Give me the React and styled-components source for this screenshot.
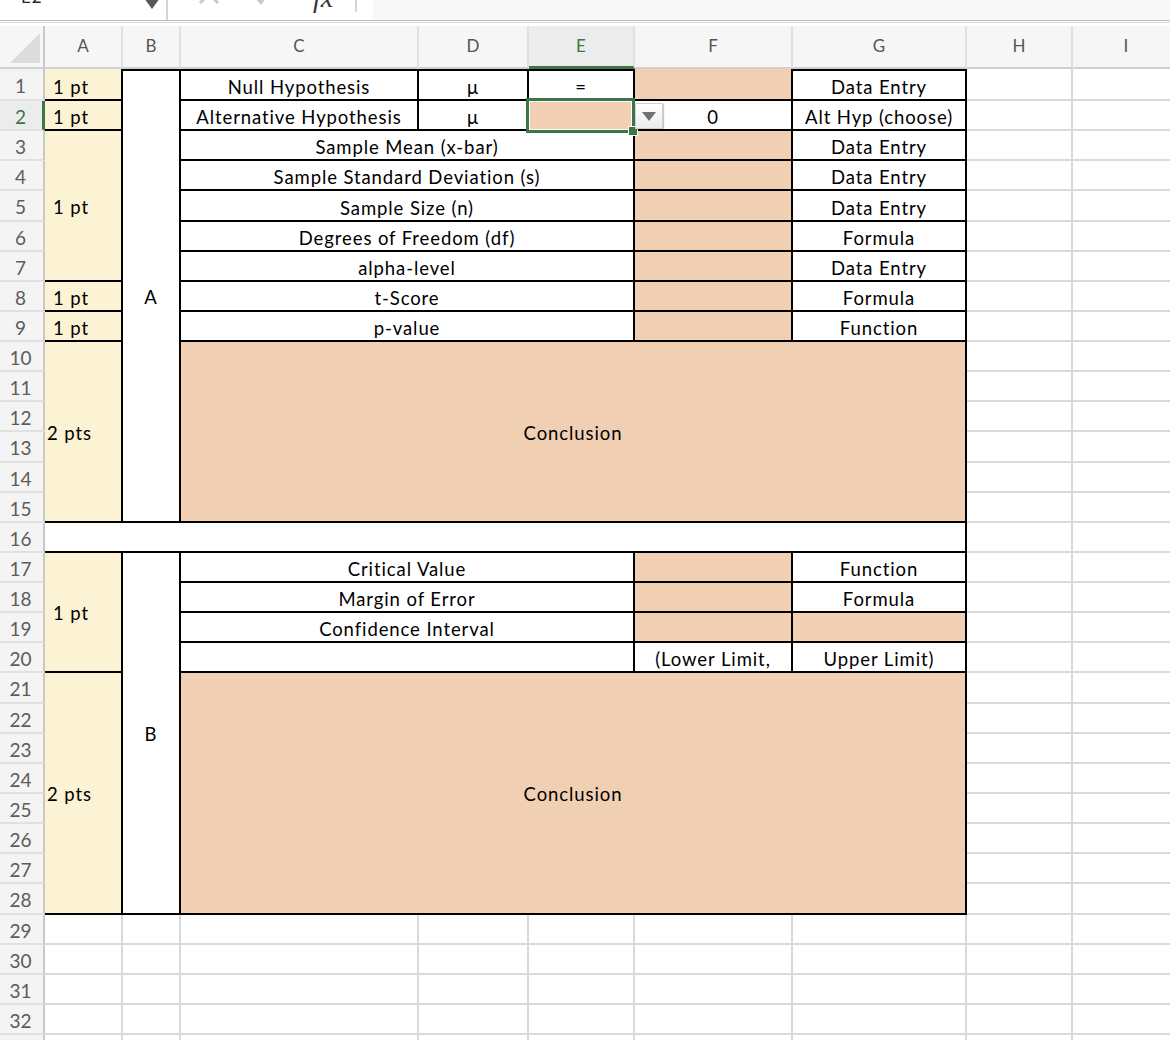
import React from 'react';
import styled, { createGlobalStyle, css } from 'styled-components';

const GlobalStyle = createGlobalStyle`
  html, body { margin: 0; padding: 0; background: #fff; }
  body { font-family: Lato, "Liberation Sans", sans-serif; overflow: hidden; width: 1170px; height: 1040px; }
`;

const GREEN = '#3b7548';
const LETTERS = 'ABCDEFGHI';
const COL_WIDTHS = [45, 78, 58, 238, 110, 106, 158, 174, 106, 108];
const ROW_COUNT = 33;
const ROW_HEIGHTS = (() => {
  const h = [32];
  let prev = 101;
  for (let i = 2; i <= ROW_COUNT; i++) {
    const b = 101 + Math.round(30.13 * (i - 1));
    h.push(b - prev);
    prev = b;
  }
  return h;
})();

const FILLS = { y: '#fcf2d4', s: '#f1cfb2', w: '#ffffff' };

/* ---------- top formula bar ---------- */
const Page = styled.div`
  display: flex;
  flex-direction: column;
  width: 1170px;
  height: 1040px;
  overflow: hidden;
`;

const TopBar = styled.div`
  height: 20px;
  display: flex;
  align-items: flex-start;
  overflow: hidden;
  background: #fff;
  flex: none;
`;

const NameBox = styled.div`
  width: 166px;
  height: 20px;
  border-right: 2px solid #d2d2d2;
  display: flex;
  justify-content: space-between;
  align-items: flex-start;
  flex: none;
`;

const NameText = styled.span`
  font: 17px/17px Lato, sans-serif;
  color: #2a2a2a;
  margin-top: -12px;
  margin-left: 21px;
  letter-spacing: 1px;
`;

const NameArrow = styled.span`
  width: 0;
  height: 0;
  border-left: 8px solid transparent;
  border-right: 8px solid transparent;
  border-top: 11px solid #585858;
  margin-top: -2px;
  margin-right: 6px;
`;

const ToolIcon = styled.svg`
  flex: none;
  margin-left: ${p => p.$ml}px;
  margin-top: ${p => p.$mt}px;
`;

const Fx = styled.span`
  font: italic 28px/28px "Liberation Serif", serif;
  color: #333;
  margin-left: 40px;
  margin-top: -16px;
  flex: none;
`;

const BarSep = styled.span`
  width: 2px;
  height: 12px;
  background: #d6d6d6;
  margin-left: 22px;
  flex: none;
`;

const FormulaInput = styled.div`
  flex: 1;
  height: 20px;
  margin-left: 16px;
  background: #f8f8f8;
`;

const Divider = styled.div`
  height: 6px;
  flex: none;
  background: linear-gradient(#bdbdbd 0 1px, #ffffff 1px 2px, #dadada 2px 3px, #ffffff 3px);
`;

/* ---------- sheet ---------- */
const Sheet = styled.div`
  display: grid;
  grid-template-columns: ${COL_WIDTHS.map(w => w + 'px').join(' ')};
  grid-template-rows: 43px ${ROW_HEIGHTS.map(h => h + 'px').join(' ')};
  flex: none;
`;

const Corner = styled.div`
  grid-column: 1;
  grid-row: 1;
  box-sizing: border-box;
  background: #f6f6f6;
  border-right: 2px solid #cacaca;
  border-bottom: 2px solid #d0d0d0;
  display: flex;
  align-items: flex-end;
  justify-content: flex-end;
  padding: 0 3px 4px 0;
`;

const CornerTriangle = styled.span`
  width: 0;
  height: 0;
  border-left: 30px solid transparent;
  border-bottom: 30px solid #dcdcdc;
`;

const ColHeader = styled.div`
  grid-column: ${p => p.$col};
  grid-row: 1;
  box-sizing: border-box;
  background: ${p => (p.$active ? '#ececec' : '#f6f6f6')};
  border-right: 2px solid #e0e0e0;
  border-bottom: ${p => (p.$active ? `3px solid ${GREEN}` : '2px solid #d0d0d0')};
  color: ${p => (p.$active ? GREEN : '#555')};
  font: 17px/20px Lato, sans-serif;
  display: flex;
  align-items: center;
  justify-content: center;
  padding-bottom: ${p => (p.$active ? '1px' : '2px')};
`;

const RowHeader = styled.div`
  grid-column: 1;
  grid-row: ${p => p.$row};
  box-sizing: border-box;
  background: ${p => (p.$active ? '#ececec' : '#f4f4f4')};
  border-right: ${p => (p.$active ? `3px solid ${GREEN}` : '2px solid #c8c8c8')};
  border-bottom: 2px solid #e0e0e0;
  color: ${p => (p.$active ? GREEN : '#5c5c5c')};
  font: 19px/22px Lato, sans-serif;
  display: flex;
  align-items: center;
  justify-content: center;
  padding: 3px ${p => (p.$active ? '1px' : '2px')} 0 0;
`;

const Cell = styled.div`
  grid-column: ${p => p.$col} / span ${p => p.$cs};
  grid-row: ${p => p.$row} / span ${p => p.$rs};
  box-sizing: border-box;
  position: relative;
  display: flex;
  align-items: ${p => (p.$mid ? 'center' : 'flex-end')};
  justify-content: ${p => (p.$left ? 'flex-start' : 'center')};
  padding: ${p => (p.$mid ? `2px 4px 0 ${p.$pad}px` : `0 4px 1px ${p.$pad}px`)};
  background: ${p => FILLS[p.$fill]};
  border-right: 2px solid #000;
  border-bottom: 2px solid #000;
  ${p => p.$top && css`border-top: 2px solid #000;`}
  font: 18.5px/22px Lato, sans-serif;
  letter-spacing: 0.9px;
  color: #000;
  white-space: nowrap;
`;

const PlainCell = styled.div`
  grid-column: ${p => p.$col};
  grid-row: ${p => p.$row};
  box-sizing: border-box;
  background: #fff;
  border-right: 2px solid #d9d9d9;
  border-bottom: 2px solid #d9d9d9;
`;

const Selection = styled.div`
  position: absolute;
  left: -3px;
  top: -3px;
  right: -2px;
  bottom: -4px;
  border: 3px solid ${GREEN};
  box-shadow: inset 0 0 0 1px #fff;
  z-index: 2;
  pointer-events: none;
`;

const FillHandle = styled.span`
  position: absolute;
  right: -6px;
  bottom: -6px;
  width: 8px;
  height: 8px;
  background: ${GREEN};
  border: 1px solid #fff;
`;

const DropButton = styled.div`
  position: absolute;
  left: 0;
  top: 2px;
  width: 28px;
  height: 26px;
  box-sizing: border-box;
  background: linear-gradient(#ffffff, #ececec);
  border: 1px solid #cfcfcf;
  box-shadow: 1px 1px 1px rgba(0, 0, 0, 0.22);
  display: flex;
  align-items: center;
  justify-content: center;
  z-index: 3;
`;

const DropTriangle = styled.span`
  width: 0;
  height: 0;
  border-left: 7px solid transparent;
  border-right: 7px solid transparent;
  border-top: 9px solid #707070;
  margin-top: 1px;
`;

/* ---------- data ---------- */
const TABLE = [
  { r: 1, c: 'A', t: '1 pt', f: 'y', left: true, pad: 8 },
  { r: 1, c: 'B', rs: 15, t: 'A', mid: true, top: true },
  { r: 1, c: 'C', t: 'Null Hypothesis', top: true },
  { r: 1, c: 'D', t: 'μ', top: true },
  { r: 1, c: 'E', t: '=', top: true },
  { r: 1, c: 'F', f: 's' },
  { r: 1, c: 'G', t: 'Data Entry', top: true },

  { r: 2, c: 'A', t: '1 pt', f: 'y', left: true, pad: 8 },
  { r: 2, c: 'C', t: 'Alternative Hypothesis' },
  { r: 2, c: 'D', t: 'μ' },
  { r: 2, c: 'E', f: 's', sel: true },
  { r: 2, c: 'F', t: '0', dd: true },
  { r: 2, c: 'G', t: 'Alt Hyp (choose)' },

  { r: 3, c: 'A', rs: 5, t: '1 pt', f: 'y', left: true, pad: 8, mid: true },
  { r: 3, c: 'C', cs: 3, t: 'Sample Mean (x-bar)' },
  { r: 3, c: 'F', f: 's' },
  { r: 3, c: 'G', t: 'Data Entry' },
  { r: 4, c: 'C', cs: 3, t: 'Sample Standard Deviation (s)' },
  { r: 4, c: 'F', f: 's' },
  { r: 4, c: 'G', t: 'Data Entry' },
  { r: 5, c: 'C', cs: 3, t: 'Sample Size (n)' },
  { r: 5, c: 'F', f: 's' },
  { r: 5, c: 'G', t: 'Data Entry' },
  { r: 6, c: 'C', cs: 3, t: 'Degrees of Freedom (df)' },
  { r: 6, c: 'F', f: 's' },
  { r: 6, c: 'G', t: 'Formula' },
  { r: 7, c: 'C', cs: 3, t: 'alpha-level' },
  { r: 7, c: 'F', f: 's' },
  { r: 7, c: 'G', t: 'Data Entry' },

  { r: 8, c: 'A', t: '1 pt', f: 'y', left: true, pad: 8 },
  { r: 8, c: 'C', cs: 3, t: 't-Score' },
  { r: 8, c: 'F', f: 's' },
  { r: 8, c: 'G', t: 'Formula' },
  { r: 9, c: 'A', t: '1 pt', f: 'y', left: true, pad: 8 },
  { r: 9, c: 'C', cs: 3, t: 'p-value' },
  { r: 9, c: 'F', f: 's' },
  { r: 9, c: 'G', t: 'Function' },

  { r: 10, c: 'A', rs: 6, t: '2 pts', f: 'y', left: true, pad: 2, mid: true },
  { r: 10, c: 'C', cs: 5, rs: 6, t: 'Conclusion', f: 's', mid: true },

  { r: 16, c: 'A', cs: 7 },

  { r: 17, c: 'A', rs: 4, t: '1 pt', f: 'y', left: true, pad: 8, mid: true },
  { r: 17, c: 'B', rs: 12, t: 'B', mid: true },
  { r: 17, c: 'C', cs: 3, t: 'Critical Value' },
  { r: 17, c: 'F', f: 's' },
  { r: 17, c: 'G', t: 'Function' },
  { r: 18, c: 'C', cs: 3, t: 'Margin of Error' },
  { r: 18, c: 'F', f: 's' },
  { r: 18, c: 'G', t: 'Formula' },
  { r: 19, c: 'C', cs: 3, t: 'Confidence Interval' },
  { r: 19, c: 'F', f: 's' },
  { r: 19, c: 'G', f: 's' },
  { r: 20, c: 'C', cs: 3 },
  { r: 20, c: 'F', t: '(Lower Limit,' },
  { r: 20, c: 'G', t: 'Upper Limit)' },

  { r: 21, c: 'A', rs: 8, t: '2 pts', f: 'y', left: true, pad: 2, mid: true },
  { r: 21, c: 'C', cs: 5, rs: 8, t: 'Conclusion', f: 's', mid: true },
];

const colIndex = c => LETTERS.indexOf(c) + 2;

const covered = new Set();
TABLE.forEach(cell => {
  const rs = cell.rs || 1;
  const cs = cell.cs || 1;
  const c0 = LETTERS.indexOf(cell.c);
  for (let r = cell.r; r < cell.r + rs; r++) {
    for (let c = c0; c < c0 + cs; c++) covered.add(`${r}-${c}`);
  }
});

const PLAIN = [];
for (let r = 1; r <= ROW_COUNT; r++) {
  for (let c = 0; c < LETTERS.length; c++) {
    if (!covered.has(`${r}-${c}`)) PLAIN.push({ r, c });
  }
}

export default function App() {
  return (
    <>
      <GlobalStyle />
      <Page>
        <TopBar>
          <NameBox>
            <NameText>E2</NameText>
            <NameArrow />
          </NameBox>
          <ToolIcon $ml={30} $mt={-17} width="22" height="22" viewBox="0 0 22 22">
            <path d="M2 2 L20 20 M20 2 L2 20" stroke="#c9c9c9" strokeWidth="3" fill="none" />
          </ToolIcon>
          <ToolIcon $ml={33} $mt={-13} width="20" height="18" viewBox="0 0 20 18">
            <polyline points="2,9 8,15 18,2" stroke="#c9c9c9" strokeWidth="3.5" fill="none" />
          </ToolIcon>
          <Fx>fx</Fx>
          <BarSep />
          <FormulaInput />
        </TopBar>
        <Divider />
        <Sheet>
          <Corner>
            <CornerTriangle />
          </Corner>
          {LETTERS.split('').map((l, i) => (
            <ColHeader key={l} $col={i + 2} $active={l === 'E'}>
              {l}
            </ColHeader>
          ))}
          {ROW_HEIGHTS.map((_, i) => (
            <RowHeader key={i} $row={i + 2} $active={i + 1 === 2}>
              {i + 1}
            </RowHeader>
          ))}
          {TABLE.map(cell => (
            <Cell
              key={`${cell.r}-${cell.c}`}
              $row={cell.r + 1}
              $col={colIndex(cell.c)}
              $rs={cell.rs || 1}
              $cs={cell.cs || 1}
              $fill={cell.f || 'w'}
              $left={cell.left}
              $pad={cell.pad != null ? cell.pad : 4}
              $mid={cell.mid}
              $top={cell.top}
            >
              {cell.t}
              {cell.sel && (
                <Selection>
                  <FillHandle />
                </Selection>
              )}
              {cell.dd && (
                <DropButton>
                  <DropTriangle />
                </DropButton>
              )}
            </Cell>
          ))}
          {PLAIN.map(p => (
            <PlainCell key={`p-${p.r}-${p.c}`} $row={p.r + 1} $col={p.c + 2} />
          ))}
        </Sheet>
      </Page>
    </>
  );
}
